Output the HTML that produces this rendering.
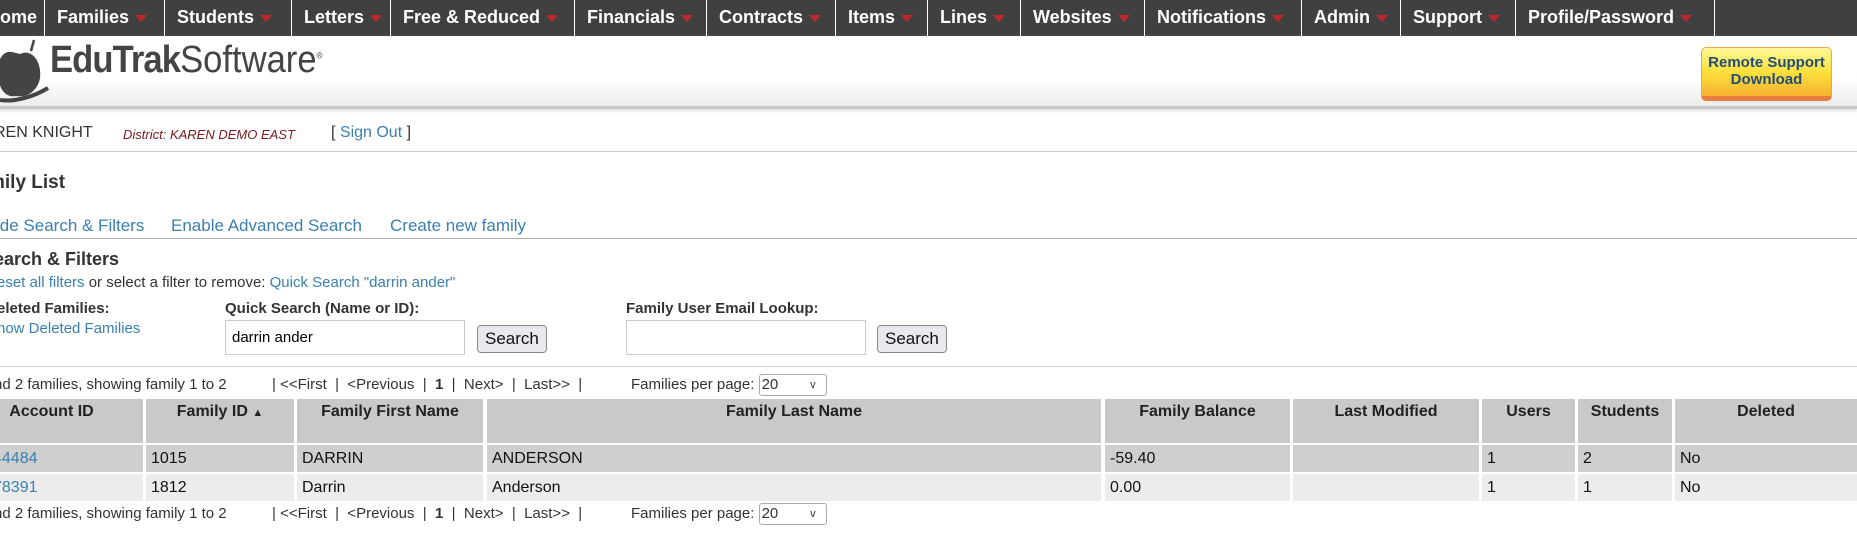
<!DOCTYPE html>
<html><head><meta charset="utf-8"><style>
*{box-sizing:border-box;margin:0;padding:0}
body{width:1857px;height:540px;overflow:hidden;background:#fff;font-family:"Liberation Sans",Arial,sans-serif;font-size:16px;color:#333;position:relative}
.nav{position:absolute;left:0;top:0;width:1857px;height:36px;background:#404040}
.nav div{position:absolute;top:0;height:36px;border-right:1px solid #fff;color:#fff;font-weight:bold;font-size:18px;line-height:34px;padding-left:12px;white-space:nowrap}
.nav div i{display:inline-block;width:0;height:0;border-left:6px solid transparent;border-right:6px solid transparent;border-top:7px solid #c0272d;margin-left:6px;vertical-align:middle}
.hdr{position:absolute;left:0;top:36px;width:1857px;height:73px;background:linear-gradient(#fff 60%,#ececec);border-bottom:3px solid #c8c8c8;box-shadow:0 2px 3px #ddd}
a,.l{color:#3a7fb0}
.abs{position:absolute;white-space:nowrap}
.hr{position:absolute;left:0;width:1857px;height:1px;background:#ccc}
b{color:#333}
input{position:absolute;height:35px;border:1px solid #ccc;font-family:inherit;font-size:15px;padding-left:6px}
.btn{position:absolute;height:28px;border:1px solid #888;border-radius:4px;background:#e8e8ee;font-size:17px;line-height:26px;padding:0 7px;color:#111}
.sel{display:inline-block;border:1px solid #aaa;border-radius:3px;width:67px;height:22px;line-height:20px;padding-left:2px;vertical-align:middle;position:relative}
.pg{position:absolute;font-size:15px;white-space:nowrap;line-height:24px}
</style></head><body>
<div class="nav">
<div style="left:-12px;width:57px">ome</div>
<div style="left:45px;width:120px">Families<i></i></div>
<div style="left:165px;width:127px">Students<i></i></div>
<div style="left:292px;width:99px">Letters<i></i></div>
<div style="left:391px;width:184px">Free &amp; Reduced<i></i></div>
<div style="left:575px;width:132px">Financials<i></i></div>
<div style="left:707px;width:129px">Contracts<i></i></div>
<div style="left:836px;width:92px">Items<i></i></div>
<div style="left:928px;width:93px">Lines<i></i></div>
<div style="left:1021px;width:124px">Websites<i></i></div>
<div style="left:1145px;width:157px">Notifications<i></i></div>
<div style="left:1302px;width:99px">Admin<i></i></div>
<div style="left:1401px;width:115px">Support<i></i></div>
<div style="left:1516px;width:199px">Profile/Password<i></i></div>
</div>
<div class="hdr">
<svg style="position:absolute;left:0;top:2px" width="50" height="66" viewBox="0 0 50 66"><path d="M34 2 L31 13" stroke="#444" stroke-width="2.5"/><path d="M12 14 C0 12 -4 28 -2 40 C0 52 6 60 16 58 C28 60 38 52 40 40 C42 24 32 10 20 16 Z" fill="#444"/><path d="M0 62 C12 64 32 60 48 50" stroke="#444" stroke-width="4" fill="none"/></svg>
<div class="abs" style="left:50px;top:3px;font-size:38px;font-weight:bold;color:#444;letter-spacing:-1px;transform:scaleX(.91);transform-origin:left">EduTrak<span style="font-weight:normal;letter-spacing:0">Software</span><sup style="font-size:9px;font-weight:normal">®</sup></div>
<div class="abs" style="left:1701px;top:11px;width:131px;height:54px;border:1px solid #e9a64c;border-radius:5px;background:linear-gradient(#fef79a,#fbe03a 50%,#f7b232);border-bottom:5px solid #e77c3c;text-align:center;color:#1f4e7a;font-weight:bold;font-size:15px;line-height:17px;padding-top:6px">Remote Support<br>Download</div>
</div>
<div class="abs" style="left:-6px;top:124px">REN KNIGHT</div>
<div class="abs" style="left:123px;top:127px;font-size:13px;font-style:italic;color:#7a1a1a">District: KAREN DEMO EAST</div>
<div class="abs" style="left:331px;top:124px">[ <span class="l">Sign Out</span> ]</div>
<div class="hr" style="top:151px"></div>
<div class="abs" style="left:-12px;top:172px;font-size:19px;font-weight:bold">mily List</div>
<div class="abs l" style="left:-4px;top:216px;font-size:17px">ide Search &amp; Filters</div>
<div class="abs l" style="left:171px;top:216px;font-size:17px">Enable Advanced Search</div>
<div class="abs l" style="left:390px;top:216px;font-size:17px">Create new family</div>
<div class="hr" style="top:238px;background:#aaa"></div>
<div class="abs" style="left:-6px;top:249px;font-size:18px;font-weight:bold">earch &amp; Filters</div>
<div class="abs" style="left:-3px;top:274px;font-size:15px"><span class="l">eset all filters</span> or select a filter to remove: <span class="l">Quick Search "darrin ander"</span></div>
<div class="abs" style="left:-3px;top:300px;font-size:15px;font-weight:bold">eleted Families:</div>
<div class="abs l" style="left:-3px;top:320px;font-size:15px">how Deleted Families</div>
<div class="abs" style="left:225px;top:300px;font-size:15px;font-weight:bold">Quick Search (Name or ID):</div>
<input style="left:225px;top:320px;width:240px" value="darrin ander">
<div class="btn" style="left:477px;top:325px">Search</div>
<div class="abs" style="left:626px;top:300px;font-size:15px;font-weight:bold">Family User Email Lookup:</div>
<input style="left:626px;top:320px;width:240px">
<div class="btn" style="left:877px;top:325px">Search</div>
<div class="hr" style="top:366px"></div>
<div id="pgs"></div>
<div id="grid"></div>
<script>
var p="";
[373,502].forEach(function(t){
 p+='<div class="pg" style="left:-6px;top:'+t+'px">nd 2 families, showing family 1 to 2</div>';
 p+='<div class="pg" style="left:272px;top:'+t+'px">| &lt;&lt;First &nbsp;| &nbsp;&lt;Previous &nbsp;| &nbsp;<b>1</b> &nbsp;| &nbsp;Next&gt; &nbsp;| &nbsp;Last&gt;&gt; &nbsp;|</div>';
 p+='<div class="pg" style="left:631px;top:'+t+'px">Families per page: <span class="sel" style="width:68px">20<span style="position:absolute;right:10px;font-size:11px">v</span></span></div>';
});
document.getElementById("pgs").innerHTML=p;
var cols=[[-40,143],[146,294],[297,483],[487,1101],[1105,1290],[1293,1479],[1482,1575],[1578,1672],[1675,1857]];
var heads=["Account ID","Family ID <span style='font-size:11px'>\u25B2</span>","Family First Name","Family Last Name","Family Balance","Last Modified","Users","Students","Deleted"];
var r1=["44484","1015","DARRIN","ANDERSON","-59.40","","1","2","No"];
var r2=["78391","1812","Darrin","Anderson","0.00","","1","1","No"];
var h="";
cols.forEach(function(c,i){
 h+='<div class="abs" style="left:'+c[0]+'px;top:399px;width:'+(c[1]-c[0])+'px;height:44px;background:#c9c9c9;text-align:center;font-weight:bold;font-size:16px;padding-top:4px;color:#222">'+heads[i]+'</div>';
 h+='<div class="abs" style="left:'+c[0]+'px;top:445px;width:'+(c[1]-c[0])+'px;height:27px;background:#cfcfcf;padding-left:5px;line-height:27px;color:#111">'+(i==0?'<span class="l" style="margin-left:28px">'+r1[i]+'</span>':r1[i])+'</div>';
 h+='<div class="abs" style="left:'+c[0]+'px;top:474px;width:'+(c[1]-c[0])+'px;height:27px;background:#ececec;padding-left:5px;line-height:27px;color:#111">'+(i==0?'<span class="l" style="margin-left:28px">'+r2[i]+'</span>':r2[i])+'</div>';
});
document.getElementById("grid").innerHTML=h;
</script>
</body></html>
